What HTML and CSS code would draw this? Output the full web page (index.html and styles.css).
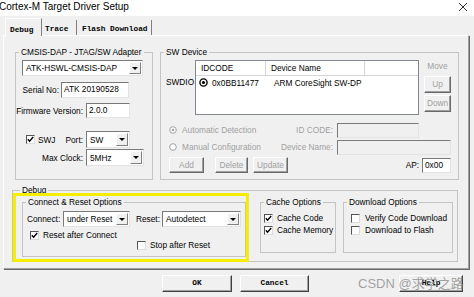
FILE: index.html
```html
<!DOCTYPE html>
<html lang="en">
<head>
    <meta charset="UTF-8">
    <meta name="viewport" content="width=device-width, initial-scale=1.0">
    <title>Cortex-M Target Driver Setup</title>
    <link rel="stylesheet" href="styles.css">
</head>
<body>
<div class="titlebar">
    <span class="title">Cortex-M Target Driver Setup</span>
    <svg class="close" width="10" height="10" viewBox="0 0 10 10"><path d="M1 1L9 9M9 1L1 9" stroke="#333" stroke-width="1"/></svg>
</div>
<div class="tabs">
    <div class="tab active">Debug</div>
    <div class="tab trace">Trace</div>
    <div class="tab flash">Flash Download</div>
</div>
<div class="panel">
    <div class="top-row">
        <fieldset class="grp adapter">
            <legend>CMSIS-DAP - JTAG/SW Adapter</legend>
            <div class="combo adapter-sel"><span>ATK-HSWL-CMSIS-DAP</span><i class="drop"></i></div>
            <div class="row serial">
                <label>Serial No:</label>
                <div class="field">ATK 20190528</div>
            </div>
            <div class="row fw">
                <label>Firmware Version:</label>
                <div class="field">2.0.0</div>
            </div>
            <div class="row swj">
                <div class="swj-left">
                    <span class="cb"><svg width="7" height="7" viewBox="0 0 7 7"><path d="M0.8 3.2L2.6 5.2L6.2 1" fill="none" stroke="#000" stroke-width="1.4"/></svg></span>
                    <span class="swj-text">SWJ</span>
                    <span class="port">Port:</span>
                </div>
                <div class="combo port-sel"><span>SW</span><i class="drop"></i></div>
            </div>
            <div class="row clock">
                <label>Max Clock:</label>
                <div class="combo clock-sel"><span>5MHz</span><i class="drop"></i></div>
            </div>
        </fieldset>

        <fieldset class="grp swdev">
            <legend>SW Device</legend>
            <div class="dev-top">
                <div class="swdio">SWDIO</div>
                <div class="list">
                    <div class="list-head">
                        <div class="col c1">IDCODE</div>
                        <div class="col c2">Device Name</div>
                        <div class="col c3"></div>
                    </div>
                    <div class="list-row">
                        <div class="c1 cell">
                            <svg class="radio" width="9" height="9" viewBox="0 0 9 9"><circle cx="4.5" cy="4.5" r="3.6" fill="#fff" stroke="#000" stroke-width="1.4"/><circle cx="4.5" cy="4.5" r="1.6" fill="#000"/></svg>
                            <span>0x0BB11477</span>
                        </div>
                        <div class="c2 cell">ARM CoreSight SW-DP</div>
                    </div>
                </div>
                <div class="side">
                    <div class="move">Move</div>
                    <div class="btn off up">Up</div>
                    <div class="btn off down">Down</div>
                </div>
            </div>
            <div class="dev-row r1">
                <div class="opt off">
                    <svg width="8" height="8" viewBox="0 0 8 8"><circle cx="4" cy="4" r="3.3" fill="#fff" stroke="#a0a0a0" stroke-width="1"/><circle cx="4" cy="4" r="1.3" fill="#a0a0a0"/></svg>
                    <span>Automatic Detection</span>
                </div>
                <span class="lbl off">ID CODE:</span>
                <div class="field dis idcode"></div>
            </div>
            <div class="dev-row r2">
                <div class="opt off">
                    <svg width="8" height="8" viewBox="0 0 8 8"><circle cx="4" cy="4" r="3.3" fill="#fff" stroke="#a0a0a0" stroke-width="1"/></svg>
                    <span>Manual Configuration</span>
                </div>
                <span class="lbl off">Device Name:</span>
                <div class="field dis devname"></div>
            </div>
            <div class="dev-row r3">
                <div class="btn off add">Add</div>
                <div class="btn off del">Delete</div>
                <div class="btn off upd">Update</div>
                <span class="spacer"></span>
                <span class="lbl">AP:</span>
                <div class="field ap">0x00</div>
            </div>
        </fieldset>
    </div>

    <fieldset class="grp debug">
        <legend>Debug</legend>
        <div class="dbg-row">
            <fieldset class="grp connect">
                <legend>Connect &amp; Reset Options</legend>
                <div class="conn-row">
                    <label class="conn-lbl">Connect:</label>
                    <div class="combo conn-sel"><span>under Reset</span><i class="drop"></i></div>
                    <label class="reset-lbl">Reset:</label>
                    <div class="combo reset-sel"><span>Autodetect</span><i class="drop"></i></div>
                </div>
                <div class="chk after">
                    <span class="cb"><svg width="7" height="7" viewBox="0 0 7 7"><path d="M0.8 3.2L2.6 5.2L6.2 1" fill="none" stroke="#000" stroke-width="1.4"/></svg></span>
                    <span>Reset after Connect</span>
                </div>
                <div class="chk stop">
                    <span class="cb"></span>
                    <span>Stop after Reset</span>
                </div>
            </fieldset>

            <fieldset class="grp cache">
                <legend>Cache Options</legend>
                <div class="chk first">
                    <span class="cb"><svg width="7" height="7" viewBox="0 0 7 7"><path d="M0.8 3.2L2.6 5.2L6.2 1" fill="none" stroke="#000" stroke-width="1.4"/></svg></span>
                    <span>Cache Code</span>
                </div>
                <div class="chk">
                    <span class="cb"><svg width="7" height="7" viewBox="0 0 7 7"><path d="M0.8 3.2L2.6 5.2L6.2 1" fill="none" stroke="#000" stroke-width="1.4"/></svg></span>
                    <span>Cache Memory</span>
                </div>
            </fieldset>

            <fieldset class="grp download">
                <legend>Download Options</legend>
                <div class="chk first">
                    <span class="cb"></span>
                    <span>Verify Code Download</span>
                </div>
                <div class="chk">
                    <span class="cb"></span>
                    <span>Download to Flash</span>
                </div>
            </fieldset>
        </div>
    </fieldset>
</div>

<div class="buttons">
    <div class="btn main ok">OK</div>
    <div class="btn main cancel">Cancel</div>
    <div class="btn main help">Help</div>
</div>

<div class="highlight"></div>
<div class="watermark">CSDN @求学之路</div>
</body>
</html>
```

FILE: styles.css
```css
body {
    margin: 0;
    width: 474px;
    height: 297px;
    overflow: hidden;
    position: relative;
    background: #f0f0f0;
    color: #000;
    font-family: "Liberation Sans", Arial, sans-serif;
    font-size: 8.3px;
    line-height: 12px;
}
.titlebar {
    height: 16px;
    background: #fff;
    display: flex;
    justify-content: space-between;
    align-items: flex-start;
    padding: 1px 6px 0 0;
    box-sizing: border-box;
}
.title {
    font-size: 10px;
    margin-left: -1px;
}
.close {
    margin-top: 1px;
}
.tabs {
    display: flex;
    align-items: flex-end;
    height: 19px;
    padding-left: 5px;
    font-family: "Liberation Mono", monospace;
    font-weight: bold;
    font-size: 7.8px;
}
.tab {
    height: 15px;
    padding: 3px 0 0 4px;
    box-sizing: border-box;
    border-right: 1px solid #808080;
    width: 35px;
}
.tab.active {
    width: 37px;
    height: 18px;
    padding-top: 5px;
    margin-bottom: -1px;
    border-top: 1px solid #fff;
    border-left: 1px solid #fff;
    background: #f0f0f0;
    position: relative;
    z-index: 1;
}
.tab.trace {
    padding-left: 3px;
}
.tab.flash {
    width: 75px;
    padding-left: 5px;
}
.panel {
    margin-left: 3px;
    width: 466px;
    height: 234px;
    box-sizing: border-box;
    border: 1px solid;
    border-color: #fff #a0a0a0 #a0a0a0 #fff;
    box-shadow: 1px 1px 0 #696969;
}
.grp {
    margin: 0;
    padding: 0;
    min-width: 0;
    box-sizing: border-box;
    border: 1px solid #c4c4c4;
}
legend {
    padding: 0 2px;
    margin-left: 3px;
    height: 12px;
    line-height: 12px;
    white-space: nowrap;
}
.top-row {
    display: flex;
    gap: 7px;
    margin: 10px 0 0 11px;
}
.adapter {
    width: 138px;
    height: 134px;
}
.swdev {
    width: 299px;
    height: 134px;
}

/* edit fields and combo boxes */
.field {
    background: #fff;
    border: 1px solid;
    border-color: #7a7a7a #e3e3e3 #e3e3e3 #7a7a7a;
    box-sizing: border-box;
    padding-left: 2px;
    line-height: 13px;
    white-space: nowrap;
}
.field.dis {
    background: #f0f0f0;
}
.combo {
    display: flex;
    align-items: center;
    background: #fff;
    border: 1px solid;
    border-color: #7a7a7a #e3e3e3 #e3e3e3 #7a7a7a;
    box-sizing: border-box;
    padding: 1px;
}
.combo span {
    flex: 1;
    padding-left: 2px;
    white-space: nowrap;
    overflow: hidden;
}
.drop {
    width: 12px;
    height: 100%;
    box-sizing: border-box;
    background: #f0f0f0;
    border: 1px solid;
    border-color: #fff #808080 #808080 #fff;
    display: flex;
    align-items: center;
    justify-content: center;
}
.drop::after {
    content: "";
    border-left: 3px solid transparent;
    border-right: 3px solid transparent;
    border-top: 3px solid #000;
}

/* adapter rows */
.adapter-sel {
    margin: 2px 0 0 6px;
    width: 121px;
    height: 16px;
}
.row {
    display: flex;
    align-items: center;
}
.row label {
    text-align: right;
    white-space: nowrap;
    flex: none;
}
.serial {
    margin-top: 6px;
    height: 16px;
    gap: 2px;
}
.serial label {
    width: 43px;
}
.serial .field {
    width: 68px;
    height: 16px;
}
.fw {
    margin-top: 5px;
    height: 15px;
    gap: 3px;
}
.fw label {
    width: 67px;
}
.fw .field {
    width: 44px;
    height: 15px;
}
.swj {
    margin-top: 13px;
    height: 17px;
    gap: 3px;
}
.swj-left {
    width: 67px;
    display: flex;
    align-items: center;
}
.swj-left .cb {
    margin-left: 10px;
}
.swj-text {
    margin-left: 3px;
    flex: 1;
}
.port-sel {
    width: 44px;
    height: 17px;
}
.clock {
    margin-top: 1px;
    height: 17px;
    gap: 3px;
}
.clock label {
    width: 67px;
}
.clock-sel {
    width: 58px;
    height: 17px;
}

/* checkbox */
.cb {
    width: 9px;
    height: 9px;
    box-sizing: border-box;
    border: 1px solid;
    border-color: #555 #dcdcdc #dcdcdc #555;
    background: #fff;
    display: flex;
    flex: none;
}

/* sw device list */
.dev-top {
    display: flex;
    margin-top: 2px;
    height: 55px;
}
.swdio {
    width: 34px;
    padding: 16px 0 0 5px;
    box-sizing: border-box;
}
.list {
    width: 224px;
    height: 55px;
    background: #fff;
    border: 1px solid #828790;
    box-sizing: border-box;
}
.list-head {
    display: flex;
    height: 15px;
    border-bottom: 1px solid #d5d5d5;
    box-sizing: border-box;
}
.col {
    border-right: 1px solid #d5d5d5;
    padding: 1px 0 0 5px;
    box-sizing: border-box;
}
.c1 {
    width: 70px;
}
.c2 {
    width: 99px;
}
.c3 {
    flex: 1;
    border-right: none;
}
.list-row {
    display: flex;
    height: 13px;
    align-items: center;
}
.cell {
    display: flex;
    align-items: center;
    white-space: nowrap;
}
.c1.cell {
    padding-left: 3px;
    gap: 4px;
}
.c2.cell {
    padding-left: 5px;
}
.side {
    margin-left: 5px;
    width: 27px;
    display: flex;
    flex-direction: column;
}
.move {
    color: #a0a0a0;
    text-align: center;
}
.btn {
    background: #f0f0f0;
    border: 1px solid;
    border-color: #fff #696969 #696969 #fff;
    box-shadow: inset -1px -1px 0 #a0a0a0;
    box-sizing: border-box;
    text-align: center;
    white-space: nowrap;
}
.up {
    margin-top: 4px;
    height: 17px;
    line-height: 15px;
}
.down {
    margin-top: 2px;
    height: 17px;
    line-height: 15px;
}
.off {
    color: #a0a0a0;
}
.dev-row {
    display: flex;
    align-items: center;
    height: 16px;
}
.opt {
    flex: 1;
    display: flex;
    align-items: center;
    gap: 5px;
    margin-left: 8px;
    white-space: nowrap;
}
.lbl {
    white-space: nowrap;
}
.r1 {
    margin-top: 7px;
}
.r1 .field {
    width: 82px;
    height: 15px;
    margin: 0 39px 0 4px;
}
.r2 {
    margin-top: 1px;
}
.r2 .field {
    width: 114px;
    height: 15px;
    margin: 0 7px 0 4px;
}
.r3 {
    margin-top: 2px;
}
.r3 .btn {
    height: 16px;
    line-height: 14px;
}
.add {
    margin-left: 8px;
    width: 35px;
}
.del {
    margin-left: 11px;
    width: 33px;
}
.upd {
    margin-left: 5px;
    width: 35px;
}
.spacer {
    flex: 1;
}
.r3 .field {
    width: 29px;
    height: 15px;
    margin: 0 7px 0 3px;
}

/* debug group */
.debug {
    margin: 4px 0 0 8px;
    width: 446px;
    height: 78px;
}
.debug > legend {
    margin-left: 7px;
}
.dbg-row {
    display: flex;
    align-items: flex-start;
}
.connect {
    margin-left: 9px;
    width: 224px;
    height: 61px;
}
.cache {
    margin-left: 14px;
    width: 76px;
    height: 57px;
}
.download {
    margin-left: 7px;
    width: 110px;
    height: 57px;
}
.conn-row {
    display: flex;
    align-items: center;
    height: 16px;
    margin-top: 3px;
}
.conn-lbl {
    margin-left: 4px;
    width: 34px;
    white-space: nowrap;
}
.conn-sel {
    margin-left: 2px;
    width: 67px;
    height: 16px;
}
.reset-lbl {
    margin-left: 6px;
    width: 23px;
}
.reset-sel {
    margin-left: 3px;
    width: 79px;
    height: 16px;
}
.chk {
    display: flex;
    align-items: center;
    gap: 4px;
    white-space: nowrap;
}
.chk.after {
    margin: 3px 0 0 7px;
    line-height: 10px;
}
.chk.stop {
    margin-left: 114px;
    line-height: 10px;
}
.chk.first {
    margin-top: 4px;
}
.cache .chk {
    margin-left: 3px;
}
.download .chk {
    margin-left: 7px;
    gap: 5px;
}

/* dialog buttons */
.buttons {
    display: flex;
    gap: 8px;
    margin: 6px 0 0 162px;
}
.btn.main {
    height: 17px;
    line-height: 15px;
    font-family: "Liberation Mono", monospace;
    font-weight: bold;
    font-size: 7.8px;
    border-color: #fff #404040 #404040 #fff;
}
.ok {
    width: 70px;
}
.cancel {
    width: 69px;
}
.help {
    width: 64px;
    margin-left: 82px;
}

/* overlays */
.highlight {
    position: absolute;
    left: 13px;
    top: 193px;
    width: 236px;
    height: 69px;
    border: 3px solid #f5ee00;
    box-sizing: border-box;
}
.watermark {
    position: absolute;
    left: 358px;
    top: 276px;
    font-family: "Liberation Sans", "Noto Sans CJK SC", sans-serif;
    font-size: 13px;
    line-height: 16px;
    color: rgba(140, 140, 140, 0.8);
    white-space: nowrap;
}
```
